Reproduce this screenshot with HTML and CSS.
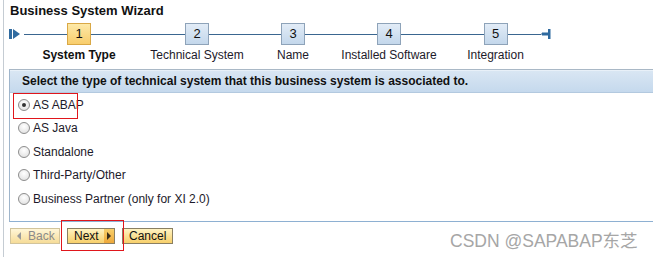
FILE: index.html
```html
<!DOCTYPE html>
<html lang="en">
<head>
    <meta charset="UTF-8">
    <title>Business System Wizard</title>
    <link rel="stylesheet" href="styles.css">
</head>
<body>
<div class="page">
    <h1 class="wizard-title">Business System Wizard</h1>

    <div class="roadmap">
        <svg class="road-start" width="13" height="22" viewBox="0 0 13 22">
            <rect x="0" y="6" width="3" height="10" fill="#2f6a9f"/>
            <polygon points="4,6 4,16 11,11" fill="#2f6a9f"/>
        </svg>
        <ol class="steps">
            <li class="step step-1 current"><span class="step-box">1</span><span class="step-label">System Type</span></li>
            <li class="step step-2"><span class="step-box">2</span><span class="step-label">Technical System</span></li>
            <li class="step step-3"><span class="step-box">3</span><span class="step-label">Name</span></li>
            <li class="step step-4"><span class="step-box">4</span><span class="step-label">Installed Software</span></li>
            <li class="step step-5"><span class="step-box">5</span><span class="step-label">Integration</span></li>
        </ol>
        <svg class="road-end" width="10" height="22" viewBox="0 0 10 22">
            <rect x="0" y="10.5" width="1" height="1" fill="#3a6690"/>
            <rect x="1" y="9.5" width="6" height="3" fill="#2f6a9f"/>
            <rect x="7" y="6" width="2.5" height="10" fill="#2f6a9f"/>
        </svg>
    </div>

    <section class="panel">
        <h2 class="panel-head">Select the type of technical system that this business system is associated to.</h2>
        <div class="panel-body">
            <ul class="options">
                <li class="option"><span class="radio checked"></span>AS ABAP</li>
                <li class="option"><span class="radio"></span>AS Java</li>
                <li class="option"><span class="radio"></span>Standalone</li>
                <li class="option"><span class="radio"></span>Third-Party/Other</li>
                <li class="option"><span class="radio"></span>Business Partner (only for XI 2.0)</li>
            </ul>
        </div>
    </section>

    <div class="actions">
        <button class="btn btn-back" disabled><span class="arrow-left"></span>Back</button>
        <button class="btn btn-next">Next<span class="btn-tail"><span class="arrow-right"></span></span></button>
        <button class="btn btn-cancel">Cancel</button>
    </div>

    <!-- highlight boxes drawn over the screenshot -->
    <div class="mark mark-abap"></div>
    <div class="mark mark-next"></div>
    <div class="watermark">CSDN @SAPABAP东芝</div>
</div>
</body>
</html>
```

FILE: styles.css
```css
body{
    margin:0;
    font-family:"Liberation Sans", Arial, sans-serif;
    font-size:12px;
    color:#1a1a22;
    background:#fff;
    overflow:hidden;
}
.page{
    position:relative;
    margin-left:3px;
    border-left:1px solid #c5ccd3;
    padding-left:5px;
    height:257px;
    box-sizing:border-box;
}
.wizard-title{
    margin:0;
    padding-left:1px;
    height:22px;
    line-height:22px;
    font-size:13px;
    font-weight:bold;
    color:#111;
}

/* roadmap */
.roadmap{
    display:flex;
    align-items:flex-start;
    height:47px;
    padding-top:1px;
    box-sizing:border-box;
}
.road-start{
    display:block;
    flex:none;
}
.steps{
    display:flex;
    margin:0;
    padding:0;
    list-style:none;
    background:linear-gradient(#3a6690,#3a6690) no-repeat 2px 11px / 100% 1px;
}
.step{
    display:flex;
    flex-direction:column;
    align-items:center;
}
.step-1{ width:114px; }
.step-2{ width:122px; }
.step-3{ width:70px; }
.step-4{ width:122px; }
.step-5{ width:91px; }
.step-box{
    width:24px;
    height:22px;
    box-sizing:border-box;
    border:1px solid #8ea3b9;
    background:linear-gradient(#e2ecf7,#c3d7eb);
    text-align:center;
    line-height:20px;
    font-size:13px;
    color:#111;
}
.current .step-box{
    border-color:#d9a846;
    background:linear-gradient(#fde9a8,#f8cd6c);
}
.step-label{
    margin-top:3px;
    line-height:14px;
    white-space:nowrap;
    color:#1d1a2a;
}
.current .step-label{
    font-weight:bold;
    color:#111;
}
.road-end{
    display:block;
    flex:none;
}

/* panel */
.panel{
    border-top:1px solid #a9b8c6;
    border-left:1px solid #9fb5cb;
    border-bottom:1px solid #8eb0d2;
}
.panel-head{
    margin:0;
    padding-left:12px;
    height:21px;
    line-height:21px;
    font-size:12px;
    font-weight:bold;
    color:#111;
    background:linear-gradient(#d9e6f3,#c5d9ed);
    border-top:1px solid #e8f0f8;
    border-bottom:1px solid #b3c9df;
    box-sizing:content-box;
}
.panel-body{
    height:128px;
    background:#fff;
}
.options{
    margin:0;
    padding:0 0 0 8px;
    list-style:none;
}
.option{
    display:flex;
    align-items:center;
    gap:3px;
    height:23.5px;
    color:#1d1a2a;
}
.radio{
    width:12px;
    height:12px;
    box-sizing:border-box;
    border:1px solid #8d8d8d;
    border-radius:50%;
    background:radial-gradient(circle at 50% 35%,#ffffff,#dcdcdc);
    position:relative;
}
.radio.checked::after{
    content:"";
    position:absolute;
    left:3px;
    top:3px;
    width:4px;
    height:4px;
    border-radius:50%;
    background:#333;
}

/* buttons */
.actions{
    display:flex;
    margin:6px 0 0 1px;
}
.btn{
    display:flex;
    align-items:center;
    height:16px;
    padding:0 0 0 5px;
    box-sizing:border-box;
    font-family:inherit;
    font-size:12px;
    color:#111;
    border:1px solid #8a7f62;
    background:linear-gradient(#fff3c2,#f7cf6a);
    cursor:pointer;
}
.btn-back{
    width:50px;
    padding-left:6px;
    color:#8a8a8a;
    border-color:#d2c49c;
    background:linear-gradient(#fff6d8,#f6dc98);
}
.arrow-left{
    width:0;
    height:0;
    margin-right:7px;
    border-top:4px solid transparent;
    border-bottom:4px solid transparent;
    border-right:4px solid #9a9a9a;
}
.btn-next{
    width:48px;
    margin-left:7px;
    padding-left:6px;
    justify-content:space-between;
    padding-right:0;
}
.btn-tail{
    display:flex;
    align-items:center;
    justify-content:center;
    width:10px;
    height:100%;
    background:linear-gradient(#f7cf6a,#eea83a);
}
.arrow-right{
    width:0;
    height:0;
    border-top:4px solid transparent;
    border-bottom:4px solid transparent;
    border-left:4px solid #3a2e1a;
}
.btn-cancel{
    width:51px;
    margin-left:7px;
    padding-left:6px;
}

/* overlays */
.mark{
    position:absolute;
    border:1px solid #e0161c;
    box-sizing:border-box;
}
.mark-abap{
    left:9px;
    top:93px;
    width:65px;
    height:26px;
}
.mark-next{
    left:57px;
    top:220px;
    width:63px;
    height:31px;
}
.watermark{
    position:absolute;
    left:446px;
    top:227px;
    font-family:"Liberation Sans", "Noto Sans CJK SC", sans-serif;
    font-size:17.5px;
    color:#a6a6a6;
    text-shadow:0 0 2px #fff;
    white-space:nowrap;
}
```
